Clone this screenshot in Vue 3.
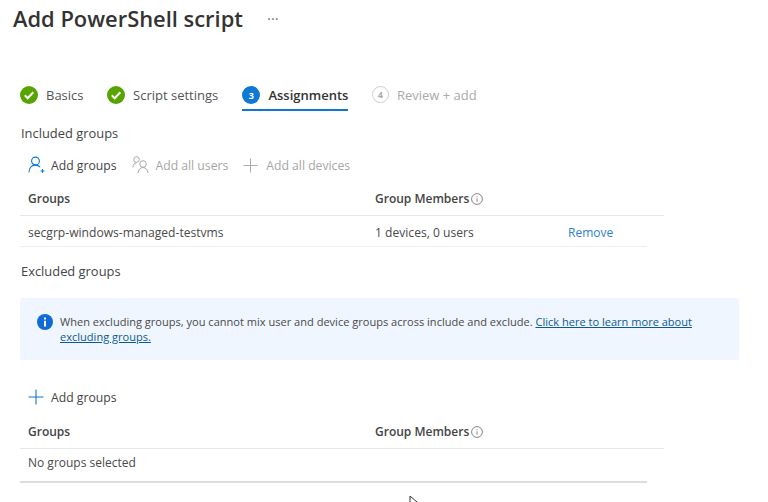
<script setup>
const steps = [
  { label: 'Basics', state: 'done' },
  { label: 'Script settings', state: 'done' },
  { label: 'Assignments', state: 'active', num: 3 },
  { label: 'Review + add', state: 'todo', num: 4 }
]
</script>

<template>
  <main class="page">
    <header class="title-row">
      <h1>Add PowerShell script</h1>
      <span class="more">···</span>
    </header>

    <nav class="steps">
      <div v-for="s in steps" :key="s.label" class="step" :class="s.state">
        <span class="badge">
          <svg v-if="s.state === 'done'" viewBox="0 0 18 18" width="18" height="18">
            <circle cx="9" cy="9" r="9" fill="#57a300" />
            <path d="M4.8 9.3l2.9 2.9 5.600-6" fill="none" stroke="#fff" stroke-width="2" />
          </svg>
          <template v-else>{{ s.num }}</template>
        </span>
        <span class="step-label">{{ s.label }}</span>
      </div>
    </nav>

    <section class="included">
      <h2>Included groups</h2>
      <div class="toolbar">
        <span class="tool">
          <svg viewBox="0 0 18 18" width="18" height="18" fill="none" stroke="#0f78d4" stroke-width="1.100">
            <circle cx="7.500" cy="5" r="3.900" />
            <path d="M1 16.500c0-4.400 2.600-7.400 6.500-7.400 2 0 3.600.8 4.700 2" />
            <path d="M14.500 13v4M12.500 15h4" />
          </svg>
          <span>Add groups</span>
        </span>
        <span class="tool off">
          <svg viewBox="0 0 18 18" width="18" height="18" fill="none" stroke="#a8a8a8" stroke-width="1">
            <circle cx="4.500" cy="3.500" r="2.800" />
            <path d="M1 11.500c0-2.800 1.200-4.500 3.500-4.500" />
            <circle cx="11" cy="8" r="3.300" />
            <path d="M6 17c.3-3.300 2.200-5.500 5-5.500s4.700 2.200 5 5.500" />
          </svg>
          <span>Add all users</span>
        </span>
        <span class="tool off wide">
          <svg viewBox="0 0 16 16" width="15" height="15" fill="none" stroke="#a8a8a8" stroke-width="1">
            <path d="M8 .5v15M.5 8h15" />
          </svg>
          <span>Add all devices</span>
        </span>
      </div>

      <div class="thead">
        <span class="col-a">Groups</span>
        <span class="col-b">Group Members
          <svg class="info" viewBox="0 0 12 12" width="12" height="12" fill="none" stroke="#666" stroke-width=".8">
            <circle cx="6" cy="6" r="5.400" />
            <path d="M6 5.300v3.400M6 3.300v1" />
          </svg>
        </span>
      </div>
      <div class="tbody">
        <span class="col-a">secgrp-windows-managed-testvms</span>
        <span class="col-b">1 devices, 0 users</span>
        <a class="remove">Remove</a>
      </div>
    </section>

    <section class="excluded">
      <h2>Excluded groups</h2>
      <div class="banner">
        <svg class="banner-icon" viewBox="0 0 16 16" width="16" height="16">
          <circle cx="8" cy="8" r="8" fill="#0f6cd4" />
          <rect x="7" y="6.800" width="2" height="5.700" fill="#fff" />
          <rect x="7" y="3.500" width="2" height="2" fill="#fff" />
        </svg>
        <p>When excluding groups, you cannot mix user and device groups across include and exclude. <a>Click here to learn more about excluding groups.</a></p>
      </div>

      <div class="toolbar second">
        <span class="tool">
          <svg viewBox="0 0 16 16" width="16" height="16" fill="none" stroke="#0f78d4" stroke-width="1.100">
            <path d="M8 .5v15M.5 8h15" />
          </svg>
          <span>Add groups</span>
        </span>
      </div>

      <div class="thead narrow">
        <span class="col-a">Groups</span>
        <span class="col-b">Group Members
          <svg class="info" viewBox="0 0 12 12" width="12" height="12" fill="none" stroke="#666" stroke-width=".8">
            <circle cx="6" cy="6" r="5.400" />
            <path d="M6 5.300v3.400M6 3.300v1" />
          </svg>
        </span>
      </div>
      <div class="empty">No groups selected</div>
    </section>

    <svg class="cursor" viewBox="0 0 12 14" width="12" height="14">
      <path d="M1 1v11l3-2.600 2 4 1.800-.9-2-3.900h4z" fill="#fff" stroke="#333" stroke-width="1" />
    </svg>
  </main>
</template>

<style>
html, body { margin: 0; background: #fff; overflow: hidden; }
</style>

<style scoped>
.page {
  position: relative;
  width: 768px;
  height: 502px;
  overflow: hidden;
  background: #fff;
  color: #4a4a4a;
  font-family: "Open Sans", "Noto Sans", sans-serif;
  font-size: 12px;
}
.title-row { display: flex; align-items: center; height: 37px; padding-left: 13px; }
h1 { margin: 0; font-size: 21.900px; font-weight: 600; color: #333; line-height: 37px; }
.more { margin-left: 24px; font-size: 15px; color: #777; line-height: 37px; }
.steps { display: flex; margin: 46px 0 0 20px; height: 28px; }
.step { display: flex; align-items: flex-start; box-sizing: border-box; height: 28px; padding-top: 3px; margin-right: 23.500px; }
.step.active { border-bottom: 2px solid #0f78d4; margin-left: 0.700px; }
.badge {
  width: 18px; height: 18px; border-radius: 50%;
  display: flex; align-items: center; justify-content: center;
  font-size: 9px; font-weight: 700; margin-right: 8px;
}
.active .badge { background: #0f78d4; color: #fff; }
.todo .badge { width: 15px; height: 15px; border: 1.500px solid #ccc; color: #aaa; }
.step-label { font-size: 13px; line-height: 18px; color: #555; }
.active .step-label { color: #333; font-weight: 600; }
.todo .step-label { color: #aaa; }
.included { margin-left: 20px; width: 644px; }
h2 { margin: 0; padding-left: 1px; font-size: 12.900px; font-weight: 400; color: #444; line-height: 18px; }
.included h2 { margin-top: 13px; }
.toolbar { display: flex; align-items: center; height: 20px; margin: 13px 0 0 8px; gap: 16px; }
.tool { display: flex; align-items: center; gap: 5px; font-size: 12.200px; color: #444; }
.tool.off { color: #a6a6a6; gap: 5px; }
.tool.wide { gap: 8px; margin-left: -1px; }
.thead { display: flex; align-items: center; height: 33px; margin-top: 7px; border-bottom: 1px solid #e8e8e8; font-weight: 600; font-size: 12px; color: #444; }
.col-a { width: 347px; padding-left: 8px; }
.col-b { display: flex; align-items: center; gap: 2px; width: 193px; }
.tbody { display: flex; align-items: center; width: 627px; height: 28px; padding-top: 2px; border-bottom: 1px solid #eee; font-size: 12.100px; }
.remove { color: #2f7fd0; font-size: 12px; }
.excluded { margin-left: 20px; width: 719px; }
.excluded h2 { margin-top: 15px; }
.banner { display: flex; gap: 7px; height: 62px; box-sizing: border-box; margin-top: 18px; padding: 16px 17px; background: #eff6ff; border-radius: 2px; }
.banner-icon { flex: none; }
.banner p { margin: 0; width: 640px; font-size: 11.050px; line-height: 15px; color: #4a4a4a; }
.banner a { color: #0c5a94; text-decoration: underline; }
.second { margin-top: 27px; gap: 0; }
.second .tool { gap: 7px; }
.narrow { width: 644px; margin-top: 8px; }
.empty { width: 627px; height: 34px; padding-left: 8px; box-sizing: border-box; line-height: 28px; border-bottom: 2px solid #ddd; }
.cursor { position: absolute; left: 409px; top: 495px; }
</style>
